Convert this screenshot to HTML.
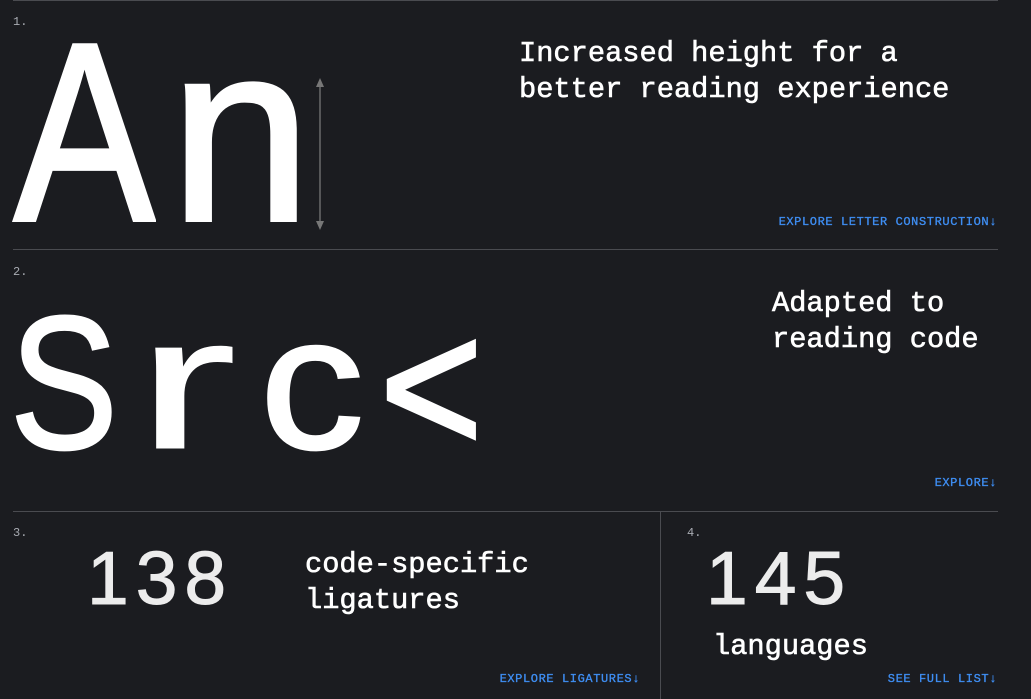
<!DOCTYPE html>
<html><head><meta charset="utf-8"><style>
html,body{margin:0;padding:0;background:#1b1c20;width:1031px;height:699px;overflow:hidden;position:relative;font-family:"Liberation Mono",monospace}
.a{position:absolute;white-space:nowrap}
.hl{position:absolute;left:13px;width:985px;height:1px;background:#4a4b50}
.big{font-family:"Liberation Sans",sans-serif;color:#fff;line-height:1;transform-origin:0 0;-webkit-text-stroke:4px #fff}
.num{font-family:"Liberation Sans",sans-serif;color:#ececec;font-size:75px;line-height:1;letter-spacing:7px;-webkit-text-stroke:1px #ececec}
.txt{font-size:28.7px;line-height:36px;color:#fff;-webkit-text-stroke:0.6px #fff}
.lbl{font-size:12px;color:#a9acb3;line-height:14px}
.lnk{font-size:12px;color:#3f8ff5;letter-spacing:0.6px;line-height:14px;-webkit-text-stroke:0.3px #3f8ff5}
</style></head><body>
<div class="hl" style="top:0"></div>
<div class="hl" style="top:249px"></div>
<div class="hl" style="top:511px"></div>
<div class="a" style="left:660px;top:512px;width:1px;height:187px;background:#4a4b50"></div>

<div class="a lbl" style="left:13px;top:15px">1.</div>
<div class="a big" style="left:14px;top:5px;font-size:254px;transform:scaleX(0.83)">A</div>
<div class="a big" style="left:170px;top:5px;font-size:254px">n</div>
<svg class="a" style="left:314px;top:76px" width="12" height="156"><line x1="6" y1="4" x2="6" y2="150" stroke="#777" stroke-width="1.3"/><path d="M2 11 L6 2 L10 11Z M2 145 L6 154 L10 145Z" fill="#777"/></svg>
<div class="a txt" style="left:519px;top:36px">Increased height for a<br>better reading experience</div>
<div class="a lnk" style="right:34px;top:215px">EXPLORE LETTER CONSTRUCTION↓</div>

<div class="a lbl" style="left:13px;top:265px">2.</div>
<div class="a big" style="left:10px;top:289px;font-size:189px;transform:scaleX(0.855);-webkit-text-stroke:3px #fff">S</div>
<div class="a big" style="left:136px;top:289px;font-size:189px;transform:scaleX(1.6);-webkit-text-stroke:1px #fff">r</div>
<div class="a big" style="left:260px;top:289px;font-size:189px;transform:scaleX(1.1);-webkit-text-stroke:3px #fff">c</div>
<div class="a big" style="left:380px;top:293px;font-size:189px;transform:scaleX(0.93)">&lt;</div>
<div class="a txt" style="left:772px;top:286px">Adapted to<br>reading code</div>
<div class="a lnk" style="right:34px;top:476px">EXPLORE↓</div>

<div class="a lbl" style="left:13px;top:526px">3.</div>
<div class="a num" style="left:87px;top:541px">138</div>
<div class="a txt" style="left:305px;top:547px">code-specific<br>ligatures</div>
<div class="a lnk" style="right:391px;top:672px">EXPLORE LIGATURES↓</div>

<div class="a lbl" style="left:687px;top:526px">4.</div>
<div class="a num" style="left:706px;top:541px">145</div>
<div class="a txt" style="left:713px;top:629px">languages</div>
<div class="a lnk" style="right:34px;top:672px">SEE FULL LIST↓</div>
</body></html>
